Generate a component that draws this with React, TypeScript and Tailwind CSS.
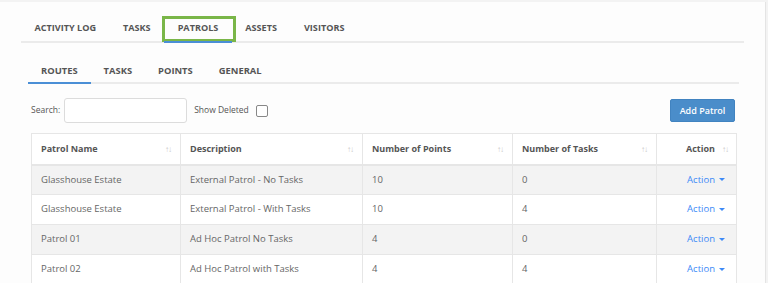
const topTabs = ['ACTIVITY LOG', 'TASKS', 'PATROLS', 'ASSETS', 'VISITORS']
const subTabs = ['ROUTES', 'TASKS', 'POINTS', 'GENERAL']

const rows = [
  { name: 'Glasshouse Estate', desc: 'External Patrol - No Tasks', points: '10', tasks: '0' },
  { name: 'Glasshouse Estate', desc: 'External Patrol - With Tasks', points: '10', tasks: '4' },
  { name: 'Patrol 01', desc: 'Ad Hoc Patrol No Tasks', points: '4', tasks: '0' },
  { name: 'Patrol 02', desc: 'Ad Hoc Patrol with Tasks', points: '4', tasks: '4' },
]

function SortIcon() {
  return <span className="text-[8px] font-normal tracking-[-1px] text-[#c8c8c8] leading-none">↑↓</span>
}

function Caret() {
  return (
    <svg width="6" height="3" viewBox="0 0 6 3" className="fill-[#3d8af7]">
      <path d="M0 0h6L3 3z" />
    </svg>
  )
}

export default function App() {
  return (
    <div className="w-[768px] h-[283px] overflow-hidden bg-[#f3f3f3] pt-[2px] font-['Open_Sans',sans-serif] text-[#555]">
      <div className="w-[766px] h-full bg-[#fdfdfd] border-r border-[#e4e4e4] px-[21px] pt-[10px]">
        {/* Top tabs */}
        <div className="flex border-b-2 border-[#ebebeb] h-[31px] items-end">
          {topTabs.map((t) => {
            const active = t === 'PATROLS'
            return (
              <div key={t} className="relative px-[13.5px] h-[29px] flex items-center pb-[2px] -mb-[2px]">
                {active && (
                  <div className="absolute left-[-2px] right-[-4px] top-[2px] bottom-[1px] border-[3px] border-[#7ab648]" />
                )}
                <span className="text-[9.1px] font-bold text-[#555]">{t}</span>
                {active && <div className="absolute left-0 right-0 bottom-0 h-[2px] bg-[#4a8fd6]" />}
              </div>
            )
          })}
        </div>

        {/* Sub tabs */}
        <div className="ml-[7px] mr-[5px] mt-[14px] flex border-b-2 border-[#ebebeb] h-[27px] items-end">
          {subTabs.map((t, i) => (
            <div key={t} className="relative px-[13px] h-[25px] flex items-center pb-[1px] -mb-[2px]">
              <span className="text-[9.4px] font-bold text-[#555]">{t}</span>
              {i === 0 && <div className="absolute left-0 right-0 bottom-0 h-[2px] bg-[#4a8fd6]" />}
            </div>
          ))}
        </div>

        {/* Toolbar */}
        <div className="ml-[10px] mr-[9px] mt-[14px] flex items-center h-[25px]">
          <span className="text-[8.5px] text-[#555]">Search:</span>
          <div className="ml-[4px] w-[123px] h-[25px] border border-[#dcdcdc] rounded-[3px] bg-white" />
          <span className="ml-[7px] text-[8.5px] text-[#555]">Show Deleted</span>
          <div className="ml-[7px] w-[12px] h-[12px] border border-[#888] rounded-[2px] bg-white" />
          <button className="ml-auto h-[23px] w-[65px] bg-[#4a8dca] text-white text-[9px] font-semibold rounded-[2px] border border-[#4183c0]">
            Add Patrol
          </button>
        </div>

        {/* Table */}
        <table className="ml-[10px] mt-[10px] w-[705px] border-collapse table-fixed text-[9.5px]">
          <colgroup>
            <col className="w-[149px]" />
            <col className="w-[182px]" />
            <col className="w-[150px]" />
            <col className="w-[144px]" />
            <col className="w-[80px]" />
          </colgroup>
          <thead>
            <tr className="h-[31px] bg-white">
              {['Patrol Name', 'Description', 'Number of Points', 'Number of Tasks'].map((h) => (
                <th key={h} className="border border-[#e6e6e6] border-b-2 px-[9px] text-left text-[9px] font-bold text-[#555]">
                  <div className="flex items-center justify-between">
                    <span>{h}</span>
                    <SortIcon />
                  </div>
                </th>
              ))}
              <th className="border border-[#e6e6e6] border-b-2 px-[8px] text-[9px] font-bold text-[#555]">
                <div className="flex items-center justify-end gap-[7px]">
                  <span>Action</span>
                  <SortIcon />
                </div>
              </th>
            </tr>
          </thead>
          <tbody>
            {rows.map((r, i) => (
              <tr key={i} className={`h-[30px] ${i % 2 === 0 ? 'bg-[#f3f3f3]' : 'bg-white'}`}>
                <td className="border border-[#e6e6e6] px-[9px] text-[#666]">{r.name}</td>
                <td className="border border-[#e6e6e6] px-[9px] text-[#666]">{r.desc}</td>
                <td className="border border-[#e6e6e6] px-[9px] text-[#666]">{r.points}</td>
                <td className="border border-[#e6e6e6] px-[9px] text-[#666]">{r.tasks}</td>
                <td className="border border-[#e6e6e6] px-[11px]">
                  <div className="flex items-center justify-end gap-[4px] text-[#3d8af7]">
                    <span>Action</span>
                    <Caret />
                  </div>
                </td>
              </tr>
            ))}
          </tbody>
        </table>
      </div>
    </div>
  )
}
